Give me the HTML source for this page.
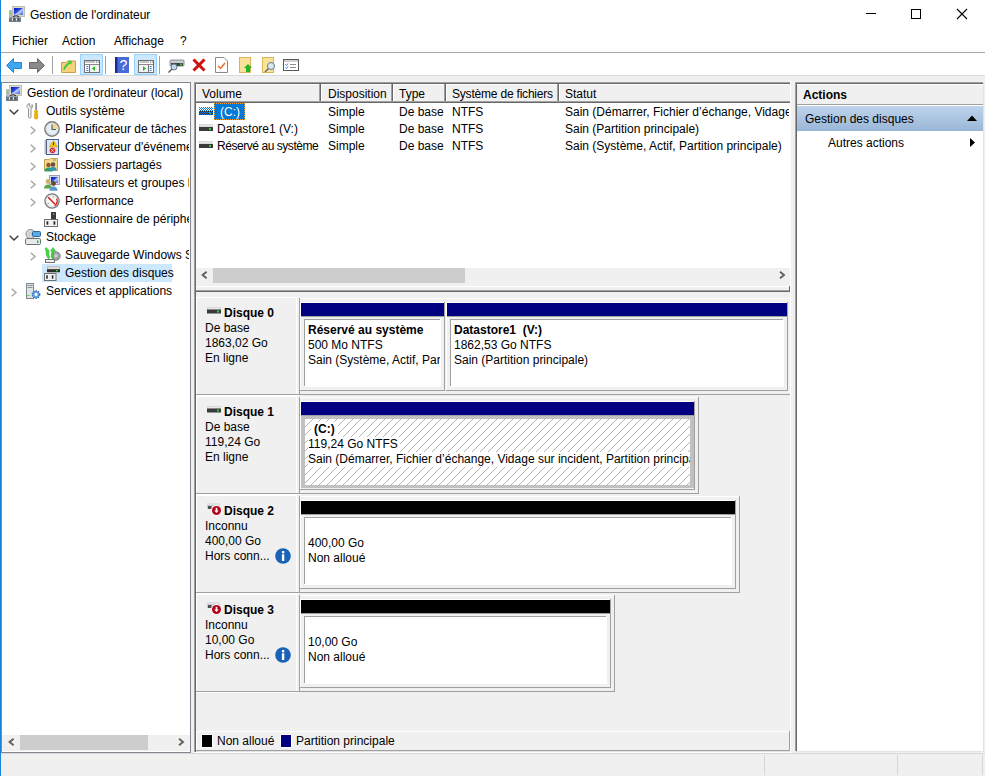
<!DOCTYPE html>
<html><head><meta charset="utf-8">
<style>
*{margin:0;padding:0;box-sizing:border-box}
html,body{width:985px;height:776px;overflow:hidden;background:#f0f0f0;font-family:"Liberation Sans",sans-serif;font-size:12px;color:#000}
.a{position:absolute}
.t{position:absolute;white-space:nowrap;line-height:15px;font-size:12px}
.b{font-weight:bold}
.clip{position:absolute;overflow:hidden}
svg{position:absolute;overflow:visible}
</style></head><body>

<div class="a" style="left:0px;top:0px;width:985px;height:75px;background:#fff;"></div>
<div class="a" style="left:0px;top:52px;width:985px;height:1px;background:#a8a8a8;"></div>
<div class="a" style="left:0px;top:75px;width:985px;height:1px;background:#dadada;"></div>
<svg style="left:9px;top:6px" width="16" height="16" viewBox="0 0 16 16"><rect x="3.5" y="0.5" width="12" height="10" fill="#dcd8c8" stroke="#c4c0b0"/><rect x="5" y="2" width="9" height="7" fill="url(#scr)"/><rect x="0" y="4" width="3" height="7" fill="#b8b8c0"/><rect x="0.5" y="6.5" width="2" height="1.5" fill="#60e040"/><path d="M4 11Q7 8.5 10 11" stroke="#333" stroke-width="1.2" fill="none"/><rect x="0" y="11" width="12" height="5" fill="#6e7c88"/><rect x="0" y="11" width="12" height="1" fill="#9aa6b0"/><rect x="3" y="12.5" width="1.2" height="2" fill="#fff"/><rect x="7" y="12.5" width="1.2" height="2" fill="#fff"/><rect x="4.5" y="12.5" width="1" height="2" fill="#222"/><rect x="8.5" y="12.5" width="1" height="2" fill="#222"/></svg>
<div class="t" style="left:30px;top:8px;">Gestion de l'ordinateur</div>
<div class="a" style="left:866px;top:13px;width:10px;height:1px;background:#000;"></div>
<div class="a" style="left:911px;top:9px;width:10px;height:10px;background:transparent;border:1px solid #000"></div>
<svg style="left:957px;top:9px" width="10" height="10" viewBox="0 0 10 10"><path d="M0 0L10 10M10 0L0 10" stroke="#000" stroke-width="1.1"/></svg>
<div class="t" style="left:12px;top:34px;">Fichier</div>
<div class="t" style="left:62px;top:34px;">Action</div>
<div class="t" style="left:114px;top:34px;">Affichage</div>
<div class="t" style="left:180px;top:34px;">?</div>
<div class="a" style="left:80px;top:54px;width:23px;height:21px;background:#cce8ff;border:1px solid #99d1ff"></div>
<div class="a" style="left:134px;top:54px;width:23px;height:21px;background:#cce8ff;border:1px solid #99d1ff"></div>
<div class="a" style="left:52px;top:56px;width:1px;height:18px;background:#a0a0a0;"></div>
<div class="a" style="left:105px;top:56px;width:1px;height:18px;background:#a0a0a0;"></div>
<div class="a" style="left:159px;top:56px;width:1px;height:18px;background:#a0a0a0;"></div>
<svg style="left:6px;top:58px" width="16" height="15" viewBox="0 0 16 15"><path d="M0.5 7.5L7.5 0.5V4.5H15.5V10.5H7.5V14.5Z" fill="#3fa6ef" stroke="#2a86d0"/></svg>
<svg style="left:29px;top:58px" width="16" height="15" viewBox="0 0 16 15"><path d="M15.5 7.5L8.5 0.5V4.5H0.5V10.5H8.5V14.5Z" fill="#8a8a8a" stroke="#6a6a6a"/></svg>
<svg style="left:61px;top:58px" width="15" height="15" viewBox="0 0 15 15"><path d="M0.5 4.5H5L6.5 3H14.5V14.5H0.5Z" fill="#f5d27a" stroke="#c9a04a"/><path d="M2 11C4 7 6 5 8 4L7 2.5L11 3L10 7L9 5.5C7 7 5 9 3.5 12Z" fill="#3cc83c"/></svg>
<svg style="left:84px;top:60px" width="16" height="13" viewBox="0 0 16 13"><rect x="0.5" y="0.5" width="15" height="12" fill="#fff" stroke="#707070"/><rect x="1" y="1" width="14" height="3" fill="#fff"/><path d="M1.5 2H11M1 4.5H15" stroke="#8a8a8a"/><rect x="12" y="1.5" width="1" height="1.2" fill="#707070"/><rect x="13.8" y="1.5" width="1" height="1.2" fill="#707070"/><path d="M5.5 5V12" stroke="#707070"/><rect x="6" y="5" width="9" height="7" fill="#f2f2f2"/><path d="M2.3 6.5H4.3M2.3 8.5H4.3M2.3 10.5H4.3" stroke="#3a7ad0"/><path d="M11 6.2V11L8 8.6Z" fill="#22b022"/></svg>
<svg style="left:115px;top:57px" width="14" height="16" viewBox="0 0 14 16"><rect x="0" y="0" width="14" height="16" fill="#2a48b8"/><rect x="0" y="0" width="2.5" height="16" fill="#1a2a88"/><rect x="2.5" y="0" width="11.5" height="16" fill="#4a6ad8"/><text x="8.3" y="13.2" font-size="14" font-family="Liberation Sans" fill="#fff" text-anchor="middle">?</text></svg>
<svg style="left:138px;top:60px" width="16" height="13" viewBox="0 0 16 13"><rect x="0.5" y="0.5" width="15" height="12" fill="#fff" stroke="#707070"/><rect x="1" y="1" width="14" height="3" fill="#fff"/><path d="M1.5 2H11M1 4.5H15" stroke="#8a8a8a"/><rect x="12" y="1.5" width="1" height="1.2" fill="#707070"/><rect x="13.8" y="1.5" width="1" height="1.2" fill="#707070"/><path d="M10.5 5V12" stroke="#707070"/><rect x="1" y="5" width="9" height="7" fill="#f2f2f2"/><path d="M11.7 6.5H13.7M11.7 8.5H13.7M11.7 10.5H13.7" stroke="#3a7ad0"/><path d="M5 6.2V11L8 8.6Z" fill="#22b022"/></svg>
<svg style="left:168px;top:59px" width="16" height="14" viewBox="0 0 16 14"><rect x="2" y="1" width="14" height="6" rx="1" fill="#c8ccd0" stroke="#8a9098"/><rect x="3" y="4" width="12" height="3" fill="#404448"/><rect x="12" y="4.5" width="2" height="2" fill="#2ad02a"/><circle cx="6" cy="8" r="3" fill="#c0d8ec" stroke="#6a7a88"/><path d="M4 10L0.5 13.5" stroke="#5a5a5a" stroke-width="1.5"/></svg>
<svg style="left:192px;top:58px" width="14" height="14" viewBox="0 0 14 14"><path d="M1.5 1.5L12.5 12.5M12.5 1.5L1.5 12.5" stroke="#d01010" stroke-width="3"/></svg>
<svg style="left:215px;top:57px" width="13" height="16" viewBox="0 0 13 16"><path d="M0.5 0.5H9L12.5 4V15.5H0.5Z" fill="#fff" stroke="#8a8a8a"/><path d="M3 9L5.5 11.5L10 6" stroke="#f06a2a" stroke-width="1.5" fill="none"/></svg>
<svg style="left:239px;top:57px" width="14" height="16" viewBox="0 0 14 16"><rect x="0.5" y="0.5" width="11" height="15" fill="#fbe29a" stroke="#d9b45a"/><path d="M9 7L13 11H11V15H7V11H5Z" fill="#22b422"/></svg>
<svg style="left:262px;top:57px" width="14" height="16" viewBox="0 0 14 16"><rect x="0.5" y="0.5" width="11" height="15" fill="#fbe29a" stroke="#d9b45a"/><circle cx="9" cy="9" r="3.5" fill="#d8e8f4" stroke="#6a7a88"/><path d="M6.5 11.5L3 15" stroke="#5a6a78" stroke-width="1.5"/></svg>
<svg style="left:283px;top:59px" width="16" height="12" viewBox="0 0 16 12"><rect x="0.5" y="0.5" width="15" height="11" fill="#fff" stroke="#5a5a5a"/><rect x="1" y="1" width="14" height="2" fill="#d0d0d0"/><path d="M2.5 5.5L3.5 6.5L5 4.5M2.5 8.5L3.5 9.5L5 7.5" stroke="#2a7ad8" fill="none"/><path d="M7 5.5H13M7 8.5H13" stroke="#8a8a8a"/></svg>
<div class="a" style="left:0px;top:0px;width:1px;height:776px;background:#1883d7;"></div>
<svg width="0" height="0" style="position:absolute"><defs><linearGradient id="scr" x1="0" y1="0" x2="1" y2="1"><stop offset="0" stop-color="#0010c0"/><stop offset="0.45" stop-color="#3050e0"/><stop offset="0.55" stop-color="#c0d0ff"/><stop offset="1" stop-color="#4060e0"/></linearGradient></defs></svg>
<div class="a" style="left:1px;top:82px;width:190px;height:671px;background:#fff;border:1px solid #828790"></div>
<div class="clip" style="left:2px;top:83px;width:187px;height:652px"><div class="a" style="left:-2px;top:-83px;width:985px;height:776px">
<svg style="left:6px;top:85px" width="16" height="16" viewBox="0 0 16 16"><rect x="3.5" y="0.5" width="12" height="10" fill="#dcd8c8" stroke="#c4c0b0"/><rect x="5" y="2" width="9" height="7" fill="url(#scr)"/><rect x="0" y="4" width="3" height="7" fill="#b8b8c0"/><rect x="0.5" y="6.5" width="2" height="1.5" fill="#60e040"/><path d="M4 11Q7 8.5 10 11" stroke="#333" stroke-width="1.2" fill="none"/><rect x="0" y="11" width="12" height="5" fill="#6e7c88"/><rect x="0" y="11" width="12" height="1" fill="#9aa6b0"/><rect x="3" y="12.5" width="1.2" height="2" fill="#fff"/><rect x="7" y="12.5" width="1.2" height="2" fill="#fff"/><rect x="4.5" y="12.5" width="1" height="2" fill="#222"/><rect x="8.5" y="12.5" width="1" height="2" fill="#222"/></svg>
<div class="t" style="left:27px;top:86px;">Gestion de l'ordinateur (local)</div>
<svg style="left:9px;top:109px" width="10" height="6" viewBox="0 0 10 6"><path d="M0.7 0.7L5 5L9.3 0.7" stroke="#3a3a3a" stroke-width="1.4" fill="none"/></svg>
<svg style="left:25px;top:103px" width="16" height="16" viewBox="0 0 16 16"><path d="M2.5 1.5C1.5 2.5 1.5 4.5 3.5 5.5V14.5Q4.8 16 6 14.5V5.5C8 4.5 8 2.5 7 1.5V4H5.5L4.5 3V0.5Z" fill="#f2f2f2" stroke="#8a8a8a" stroke-width="0.9"/><rect x="10.5" y="0" width="1.2" height="7.5" fill="#5a5a5a"/><rect x="9" y="7.5" width="4.2" height="2" fill="#f0b400"/><rect x="9.5" y="9.5" width="3.2" height="6.5" rx="1" fill="#f0b400" stroke="#d09000" stroke-width="0.5"/></svg>
<div class="t" style="left:46px;top:104px;">Outils système</div>
<svg style="left:30px;top:126px" width="6" height="9" viewBox="0 0 6 9"><path d="M0.7 0.7L5 4.5L0.7 8.3" stroke="#a6a6a6" stroke-width="1.4" fill="none"/></svg>
<svg style="left:44px;top:121px" width="16" height="16" viewBox="0 0 16 16"><circle cx="8" cy="8" r="7.2" fill="#e6eff7" stroke="#7c7c7c" stroke-width="1.4"/><circle cx="8" cy="8" r="5.8" fill="none" stroke="#c8d4de" stroke-width="0.6"/><path d="M8 8V2.2A5.8 5.8 0 0 1 13.8 8Z" fill="#f2d68e"/><path d="M8 3.5V8.5H12" stroke="#4a5e74" stroke-width="1.1" fill="none"/></svg>
<div class="t" style="left:65px;top:122px;">Planificateur de tâches</div>
<svg style="left:30px;top:144px" width="6" height="9" viewBox="0 0 6 9"><path d="M0.7 0.7L5 4.5L0.7 8.3" stroke="#a6a6a6" stroke-width="1.4" fill="none"/></svg>
<svg style="left:44px;top:139px" width="16" height="16" viewBox="0 0 16 16"><rect x="2.5" y="0.5" width="12" height="15" fill="#dfe8f6" stroke="#4a5c94"/><path d="M5 4H13M5 6H13M5 8H13M5 10H13M5 12H13" stroke="#b8c8e4" stroke-width="0.8"/><path d="M0.5 2H3M0.5 4H3M0.5 6H3M0.5 8H3M0.5 10H3M0.5 12H3M0.5 14H3" stroke="#666" stroke-width="0.9"/><path d="M9.5 1.5L13.5 8H5.5Z" fill="#f4c400" stroke="#c89000" stroke-width="0.5"/><rect x="9" y="3.5" width="1" height="2.5" fill="#333"/><circle cx="8.5" cy="11.5" r="2.8" fill="#d42a2a"/><path d="M7.3 10.3L9.7 12.7M9.7 10.3L7.3 12.7" stroke="#fff" stroke-width="0.8"/></svg>
<div class="t" style="left:65px;top:140px;">Observateur d'événements</div>
<svg style="left:30px;top:162px" width="6" height="9" viewBox="0 0 6 9"><path d="M0.7 0.7L5 4.5L0.7 8.3" stroke="#a6a6a6" stroke-width="1.4" fill="none"/></svg>
<svg style="left:44px;top:157px" width="16" height="16" viewBox="0 0 16 16"><path d="M0.5 2.5H5.5L6.5 1.5H13.5V13.5H0.5Z" fill="#f6d88a" stroke="#c8a050"/><rect x="9" y="2.5" width="3" height="1" fill="#5aa0e0"/><circle cx="4.5" cy="8" r="2.2" fill="#8a5a3a"/><path d="M0.5 14.5C0.5 11.5 2.5 10.5 4.5 10.5S8.5 11.5 8.5 14.5Z" fill="#2ea06a"/><circle cx="9" cy="7.5" r="2.2" fill="#6a4a3a"/><path d="M5.5 13.5C5.5 10.5 7 10 9 10S12.5 10.5 12.5 13.5Z" fill="#2a9ac0"/></svg>
<div class="t" style="left:65px;top:158px;">Dossiers partagés</div>
<svg style="left:30px;top:180px" width="6" height="9" viewBox="0 0 6 9"><path d="M0.7 0.7L5 4.5L0.7 8.3" stroke="#a6a6a6" stroke-width="1.4" fill="none"/></svg>
<svg style="left:44px;top:175px" width="16" height="16" viewBox="0 0 16 16"><rect x="5.5" y="0.5" width="10" height="9" fill="#d8dce0" stroke="#a0a4a8"/><rect x="7" y="2" width="7" height="6" fill="url(#scr)"/><circle cx="4" cy="6.5" r="2.4" fill="#d4b070"/><path d="M0 13.5C0 10.5 2 9.5 4 9.5S8 10.5 8 13.5Z" fill="#5aa84a"/><circle cx="9.5" cy="8.5" r="2.4" fill="#6a4a30"/><path d="M5.5 15.8C5.5 12.5 7.5 11.5 9.5 11.5S13.5 12.5 13.5 15.8Z" fill="#5a9ad0"/></svg>
<div class="t" style="left:65px;top:176px;">Utilisateurs et groupes locaux</div>
<svg style="left:30px;top:198px" width="6" height="9" viewBox="0 0 6 9"><path d="M0.7 0.7L5 4.5L0.7 8.3" stroke="#a6a6a6" stroke-width="1.4" fill="none"/></svg>
<svg style="left:44px;top:193px" width="16" height="16" viewBox="0 0 16 16"><circle cx="8" cy="8" r="7.1" fill="#f8f8f8" stroke="#7a7a7a" stroke-width="1.3"/><circle cx="8" cy="8" r="5.6" fill="none" stroke="#d0d0d0" stroke-width="0.6"/><path d="M12.6 5.5A5.2 5.2 0 0 1 10.5 12.6" stroke="#d82020" stroke-width="1.4" fill="none"/><path d="M4.2 4.2L10.8 11" stroke="#d82020" stroke-width="1.6"/><path d="M3.5 11L5 10M9.5 3.5L9 5" stroke="#5aa05a" stroke-width="0.8"/></svg>
<div class="t" style="left:65px;top:194px;">Performance</div>
<svg style="left:44px;top:211px" width="16" height="16" viewBox="0 0 16 16"><rect x="7" y="1" width="5" height="7" fill="#3a3a3a"/><rect x="9" y="2.5" width="1.3" height="1.3" fill="#40e040"/><rect x="0.5" y="8.5" width="13" height="7" fill="#f2f2f2" stroke="#707070"/><rect x="2.5" y="10.3" width="1.8" height="3.4" fill="#2a2a2a"/><rect x="9.5" y="10.3" width="1.8" height="3.4" fill="#2a2a2a"/></svg>
<div class="t" style="left:65px;top:212px;">Gestionnaire de périphériques</div>
<svg style="left:9px;top:235px" width="10" height="6" viewBox="0 0 10 6"><path d="M0.7 0.7L5 5L9.3 0.7" stroke="#3a3a3a" stroke-width="1.4" fill="none"/></svg>
<svg style="left:25px;top:229px" width="16" height="16" viewBox="0 0 16 16"><circle cx="5.5" cy="5" r="4.5" fill="#d8dadc" stroke="#8a8c90"/><circle cx="5.5" cy="5" r="1.2" fill="#fff" stroke="#888" stroke-width="0.5"/><rect x="7.5" y="2.5" width="8" height="5" rx="1" fill="#5aace0" stroke="#2a6aa0"/><rect x="0.5" y="9.5" width="15" height="6" rx="1.2" fill="#e6e8ea" stroke="#6a7078"/><rect x="12" y="11.5" width="1.5" height="2.5" fill="#30c030"/></svg>
<div class="t" style="left:46px;top:230px;">Stockage</div>
<svg style="left:30px;top:252px" width="6" height="9" viewBox="0 0 6 9"><path d="M0.7 0.7L5 4.5L0.7 8.3" stroke="#a6a6a6" stroke-width="1.4" fill="none"/></svg>
<svg style="left:44px;top:247px" width="16" height="16" viewBox="0 0 16 16"><rect x="1.5" y="12.5" width="9" height="3" fill="#f0f0f0" stroke="#707070"/><circle cx="12" cy="9" r="4.2" fill="#a8acb0" stroke="#606468" stroke-width="0.8"/><circle cx="12" cy="9" r="1.2" fill="#e0e0e0"/><path d="M12.5 10L14.5 12" stroke="#e07050" stroke-width="1"/><path d="M1 2C3 4 1.5 6 2.5 8.5C3 10 4 11 4.5 12L6 10C5 9 4.5 7.5 5 5.5C5.5 4 4 2 2 0.5Z" fill="#40d840" stroke="#28a828" stroke-width="0.5"/><path d="M9 0.5L6.5 4H8C7.5 6 7 8 8 11L9.5 12.5C9 10 9 7 10 4H11.5Z" fill="#40d840" stroke="#28a828" stroke-width="0.5"/></svg>
<div class="t" style="left:65px;top:248px;">Sauvegarde Windows Server</div>
<div class="a" style="left:42px;top:264px;width:130px;height:18px;background:#cce8ff;"></div>
<svg style="left:44px;top:265px" width="16" height="16" viewBox="0 0 16 16"><rect x="3.5" y="1.5" width="12" height="5.5" fill="#dcdcdc" stroke="#b8b8b8" stroke-width="0.8"/><rect x="3" y="4.2" width="13" height="3" fill="#2e2e2e"/><rect x="12" y="5" width="1.6" height="1.4" fill="#30e030"/><rect x="0.5" y="8.5" width="11.5" height="7" fill="#f2f2f2" stroke="#707070"/><rect x="2.2" y="10.3" width="1.6" height="3.4" fill="#2a2a2a"/><rect x="7.8" y="10.3" width="1.6" height="3.4" fill="#2a2a2a"/></svg>
<div class="t" style="left:65px;top:266px;">Gestion des disques</div>
<svg style="left:11px;top:288px" width="6" height="9" viewBox="0 0 6 9"><path d="M0.7 0.7L5 4.5L0.7 8.3" stroke="#a6a6a6" stroke-width="1.4" fill="none"/></svg>
<svg style="left:25px;top:283px" width="16" height="16" viewBox="0 0 16 16"><rect x="1.5" y="0.5" width="7" height="15" fill="#dfe3e6" stroke="#808890"/><path d="M2.5 2.5H7.5M2.5 4.5H7.5" stroke="#808890" stroke-width="0.9"/><rect x="2.5" y="12" width="2" height="1" fill="#3c3"/><circle cx="11" cy="11.5" r="3.6" fill="#6aa8e6" stroke="#3a78c0" stroke-width="1.6" stroke-dasharray="1.4 0.9"/><circle cx="11" cy="11.5" r="1.4" fill="#fff"/></svg>
<div class="t" style="left:46px;top:284px;">Services et applications</div>
</div></div>
<div class="a" style="left:2px;top:735px;width:188px;height:16px;background:#f0f0f0;"></div>
<div class="a" style="left:20px;top:735px;width:128px;height:15px;background:#cdcdcd;"></div>
<svg style="left:8px;top:738px" width="7" height="8" viewBox="0 0 7 8"><path d="M5.6 0.8L1.6 4L5.6 7.2" stroke="#606060" stroke-width="1.9" fill="none"/></svg>
<svg style="left:178px;top:738px" width="7" height="8" viewBox="0 0 7 8"><path d="M1 0.8L5 4L1 7.2" stroke="#606060" stroke-width="1.9" fill="none"/></svg>
<div class="a" style="left:2px;top:751px;width:188px;height:1px;background:#fff;"></div>
<div class="a" style="left:194px;top:82px;width:597px;height:206px;background:#fff;"></div>
<div class="a" style="left:194px;top:82px;width:596px;height:1px;background:#a0a0a0;"></div>
<div class="a" style="left:195px;top:83px;width:595px;height:1px;background:#696969;"></div>
<div class="a" style="left:194px;top:82px;width:1px;height:671px;background:#a0a0a0;"></div>
<div class="a" style="left:195px;top:83px;width:1px;height:669px;background:#696969;"></div>
<div class="a" style="left:790px;top:82px;width:1px;height:671px;background:#ffffff;"></div>
<div class="a" style="left:196px;top:84px;width:594px;height:19px;background:#f0f0f0;"></div>
<div class="a" style="left:196px;top:84px;width:125px;height:1px;background:#fff;"></div>
<div class="a" style="left:196px;top:84px;width:1px;height:18px;background:#fff;"></div>
<div class="a" style="left:319px;top:84px;width:1px;height:18px;background:#a0a0a0;"></div>
<div class="a" style="left:320px;top:84px;width:1px;height:19px;background:#696969;"></div>
<div class="t" style="left:202px;top:87px;">Volume</div>
<div class="a" style="left:321px;top:84px;width:72px;height:1px;background:#fff;"></div>
<div class="a" style="left:321px;top:84px;width:1px;height:18px;background:#fff;"></div>
<div class="a" style="left:391px;top:84px;width:1px;height:18px;background:#a0a0a0;"></div>
<div class="a" style="left:392px;top:84px;width:1px;height:19px;background:#696969;"></div>
<div class="t" style="left:328px;top:87px;">Disposition</div>
<div class="a" style="left:393px;top:84px;width:53px;height:1px;background:#fff;"></div>
<div class="a" style="left:393px;top:84px;width:1px;height:18px;background:#fff;"></div>
<div class="a" style="left:444px;top:84px;width:1px;height:18px;background:#a0a0a0;"></div>
<div class="a" style="left:445px;top:84px;width:1px;height:19px;background:#696969;"></div>
<div class="t" style="left:399px;top:87px;">Type</div>
<div class="a" style="left:446px;top:84px;width:113px;height:1px;background:#fff;"></div>
<div class="a" style="left:446px;top:84px;width:1px;height:18px;background:#fff;"></div>
<div class="a" style="left:557px;top:84px;width:1px;height:18px;background:#a0a0a0;"></div>
<div class="a" style="left:558px;top:84px;width:1px;height:19px;background:#696969;"></div>
<div class="t" style="left:452px;top:87px;letter-spacing:-0.2px">Système de fichiers</div>
<div class="a" style="left:559px;top:84px;width:230px;height:1px;background:#fff;"></div>
<div class="a" style="left:559px;top:84px;width:1px;height:18px;background:#fff;"></div>
<div class="t" style="left:565px;top:87px;">Statut</div>
<div class="a" style="left:196px;top:101px;width:594px;height:1px;background:#a0a0a0;"></div>
<div class="a" style="left:196px;top:102px;width:594px;height:1px;background:#696969;"></div>
<div class="a" style="left:214px;top:103px;width:31px;height:17px;background:#0078d7;outline:1px dotted #f0a030;outline-offset:-1px"></div>
<div class="t" style="left:220px;top:105px;color:#fff">(C:)</div>
<svg style="left:199px;top:107px" width="14" height="9" viewBox="0 0 14 9"><g shape-rendering="crispEdges"><rect x="1" y="0" width="12" height="4" fill="#fff"/><rect x="0" y="4" width="14" height="4" fill="#303030"/><rect x="10" y="5" width="2" height="2" fill="#20d020"/><rect x="0" y="0" width="14" height="8" fill="url(#chk)"/></g></svg>
<div class="t" style="left:328px;top:105px;">Simple</div>
<div class="t" style="left:399px;top:105px;">De base</div>
<div class="t" style="left:452px;top:105px;">NTFS</div>
<svg style="left:199px;top:124px" width="14" height="8" viewBox="0 0 14 8"><rect x="0.5" y="0.5" width="13" height="2" fill="#e8e8e8" stroke="#c0c0c0" stroke-width="0.5"/><rect x="0" y="3" width="14" height="4" fill="#3a3a3a"/><rect x="10" y="4" width="2" height="2" fill="#2ad02a"/></svg>
<div class="t" style="left:217px;top:122px;">Datastore1 (V:)</div>
<div class="t" style="left:328px;top:122px;">Simple</div>
<div class="t" style="left:399px;top:122px;">De base</div>
<div class="t" style="left:452px;top:122px;">NTFS</div>
<svg style="left:199px;top:141px" width="14" height="8" viewBox="0 0 14 8"><rect x="0.5" y="0.5" width="13" height="2" fill="#e8e8e8" stroke="#c0c0c0" stroke-width="0.5"/><rect x="0" y="3" width="14" height="4" fill="#3a3a3a"/><rect x="10" y="4" width="2" height="2" fill="#2ad02a"/></svg>
<div class="t" style="left:217px;top:139px;letter-spacing:-0.45px">Réservé au système</div>
<div class="t" style="left:328px;top:139px;">Simple</div>
<div class="t" style="left:399px;top:139px;">De base</div>
<div class="t" style="left:452px;top:139px;">NTFS</div>
<div class="clip" style="left:559px;top:103px;width:230px;height:60px">
<div class="t" style="left:6px;top:2px">Sain (Démarrer, Fichier d’échange, Vidage sur incident, Partition principale)</div>
<div class="t" style="left:6px;top:19px">Sain (Partition principale)</div>
<div class="t" style="left:6px;top:36px">Sain (Système, Actif, Partition principale)</div>
</div>
<div class="a" style="left:196px;top:268px;width:594px;height:18px;background:#f0f0f0;"></div>
<div class="a" style="left:213px;top:268px;width:252px;height:15px;background:#cdcdcd;"></div>
<svg style="left:201px;top:271px" width="7" height="8" viewBox="0 0 7 8"><path d="M5.6 0.8L1.6 4L5.6 7.2" stroke="#606060" stroke-width="1.9" fill="none"/></svg>
<svg style="left:779px;top:271px" width="7" height="8" viewBox="0 0 7 8"><path d="M1 0.8L5 4L1 7.2" stroke="#606060" stroke-width="1.9" fill="none"/></svg>
<div class="a" style="left:196px;top:286px;width:594px;height:1px;background:#fff;"></div>
<div class="a" style="left:196px;top:287px;width:594px;height:3px;background:#f0f0f0;"></div>
<div class="a" style="left:196px;top:287px;width:1px;height:3px;background:#fff;"></div>
<div class="a" style="left:196px;top:292px;width:594px;height:459px;background:#f0f0f0;"></div>
<div class="a" style="left:196px;top:290px;width:594px;height:1px;background:#a0a0a0;"></div>
<div class="a" style="left:196px;top:291px;width:594px;height:1px;background:#696969;"></div>
<div class="a" style="left:789px;top:286px;width:1px;height:6px;background:#696969;"></div>
<div class="a" style="left:194px;top:752px;width:597px;height:1px;background:#fff;"></div>
<div class="a" style="left:196px;top:751px;width:594px;height:1px;background:#e3e3e3;"></div>
<svg width="0" height="0" style="position:absolute"><defs><pattern id="hatch" width="8" height="8" patternUnits="userSpaceOnUse"><path d="M-1 1L1 -1M0 8L8 0M7 9L9 7" stroke="#a0a0a0" stroke-width="0.8"/></pattern><pattern id="chk" width="2" height="2" patternUnits="userSpaceOnUse"><rect x="0" y="0" width="1" height="1" fill="#0a78d8"/><rect x="1" y="1" width="1" height="1" fill="#0a78d8"/></pattern></defs></svg>
<div class="a" style="left:196px;top:297px;width:101px;height:1px;background:#fff;"></div>
<div class="a" style="left:196px;top:297px;width:1px;height:98px;background:#fff;"></div>
<div class="a" style="left:296px;top:297px;width:1px;height:98px;background:#fff;"></div>
<div class="a" style="left:196px;top:394px;width:103px;height:1px;background:#a0a0a0;"></div>
<div class="a" style="left:196px;top:395px;width:103px;height:1px;background:#fff;"></div>
<svg style="left:207px;top:307px" width="14" height="7" viewBox="0 0 14 7"><rect x="0.5" y="0.5" width="13" height="2" fill="#e8e8e8" stroke="#c8c8c8" stroke-width="0.5"/><rect x="0" y="2.5" width="14" height="4" fill="#3a3a3a"/><rect x="10" y="3.5" width="2" height="2" fill="#2ad02a"/></svg>
<div class="t b" style="left:224px;top:306px;">Disque 0</div>
<div class="t" style="left:205px;top:321px;">De base</div>
<div class="t" style="left:205px;top:336px;">1863,02 Go</div>
<div class="t" style="left:205px;top:351px;">En ligne</div>
<div class="a" style="left:299px;top:298px;width:1px;height:97px;background:#a0a0a0;"></div>
<div class="a" style="left:300px;top:298px;width:490px;height:1px;background:#fff;"></div>
<div class="a" style="left:299px;top:394px;width:491px;height:1px;background:#a0a0a0;"></div>
<div class="a" style="left:300px;top:302px;width:144px;height:1px;background:#fff;"></div>
<div class="a" style="left:300px;top:302px;width:1px;height:88px;background:#fff;"></div>
<div class="a" style="left:444px;top:302px;width:1px;height:89px;background:#a0a0a0;"></div>
<div class="a" style="left:300px;top:390px;width:145px;height:1px;background:#a0a0a0;"></div>
<div class="a" style="left:301px;top:303px;width:143px;height:13px;background:#000080;"></div>
<div class="a" style="left:301px;top:316px;width:143px;height:1px;background:#a0a0a0;"></div>
<div class="a" style="left:304px;top:319px;width:137px;height:68px;background:#fff;"></div>
<div class="a" style="left:304px;top:319px;width:136px;height:1px;background:#a0a0a0;"></div>
<div class="a" style="left:304px;top:319px;width:1px;height:67px;background:#a0a0a0;"></div>
<div class="clip" style="left:305px;top:320px;width:135px;height:66px"><div class="a" style="left:-305px;top:-320px;width:985px;height:776px">
<div class="t b" style="left:308px;top:323px;">Réservé au système</div>
<div class="t" style="left:308px;top:338px;">500 Mo NTFS</div>
<div class="t" style="left:308px;top:353px;">Sain (Système, Actif, Partition principale)</div>
</div></div>
<div class="a" style="left:446px;top:302px;width:341px;height:1px;background:#fff;"></div>
<div class="a" style="left:446px;top:302px;width:1px;height:88px;background:#fff;"></div>
<div class="a" style="left:787px;top:302px;width:1px;height:89px;background:#a0a0a0;"></div>
<div class="a" style="left:446px;top:390px;width:342px;height:1px;background:#a0a0a0;"></div>
<div class="a" style="left:447px;top:303px;width:340px;height:13px;background:#000080;"></div>
<div class="a" style="left:447px;top:316px;width:340px;height:1px;background:#a0a0a0;"></div>
<div class="a" style="left:450px;top:319px;width:334px;height:68px;background:#fff;"></div>
<div class="a" style="left:450px;top:319px;width:333px;height:1px;background:#a0a0a0;"></div>
<div class="a" style="left:450px;top:319px;width:1px;height:67px;background:#a0a0a0;"></div>
<div class="clip" style="left:451px;top:320px;width:332px;height:66px"><div class="a" style="left:-451px;top:-320px;width:985px;height:776px">
<div class="t b" style="left:454px;top:323px;">Datastore1&nbsp; (V:)</div>
<div class="t" style="left:454px;top:338px;">1862,53 Go NTFS</div>
<div class="t" style="left:454px;top:353px;">Sain (Partition principale)</div>
</div></div>
<div class="a" style="left:196px;top:396px;width:101px;height:1px;background:#fff;"></div>
<div class="a" style="left:196px;top:396px;width:1px;height:98px;background:#fff;"></div>
<div class="a" style="left:296px;top:396px;width:1px;height:98px;background:#fff;"></div>
<div class="a" style="left:196px;top:493px;width:103px;height:1px;background:#a0a0a0;"></div>
<div class="a" style="left:196px;top:494px;width:103px;height:1px;background:#fff;"></div>
<svg style="left:207px;top:406px" width="14" height="7" viewBox="0 0 14 7"><rect x="0.5" y="0.5" width="13" height="2" fill="#e8e8e8" stroke="#c8c8c8" stroke-width="0.5"/><rect x="0" y="2.5" width="14" height="4" fill="#3a3a3a"/><rect x="10" y="3.5" width="2" height="2" fill="#2ad02a"/></svg>
<div class="t b" style="left:224px;top:405px;">Disque 1</div>
<div class="t" style="left:205px;top:420px;">De base</div>
<div class="t" style="left:205px;top:435px;">119,24 Go</div>
<div class="t" style="left:205px;top:450px;">En ligne</div>
<div class="a" style="left:299px;top:397px;width:1px;height:97px;background:#a0a0a0;"></div>
<div class="a" style="left:300px;top:397px;width:399px;height:1px;background:#fff;"></div>
<div class="a" style="left:698px;top:397px;width:1px;height:97px;background:#a0a0a0;"></div>
<div class="a" style="left:299px;top:493px;width:400px;height:1px;background:#a0a0a0;"></div>
<div class="a" style="left:300px;top:401px;width:394px;height:1px;background:#fff;"></div>
<div class="a" style="left:300px;top:401px;width:1px;height:88px;background:#fff;"></div>
<div class="a" style="left:694px;top:401px;width:1px;height:89px;background:#a0a0a0;"></div>
<div class="a" style="left:300px;top:489px;width:395px;height:1px;background:#a0a0a0;"></div>
<div class="a" style="left:301px;top:402px;width:393px;height:13px;background:#000080;"></div>
<div class="a" style="left:301px;top:415px;width:393px;height:1px;background:#a0a0a0;"></div>
<div class="a" style="left:301px;top:415px;width:393px;height:73px;background:#c0c0c0;"></div>
<div class="a" style="left:301px;top:415px;width:393px;height:1px;background:#a0a0a0;"></div>
<svg style="left:305px;top:419px" width="385" height="66"><rect width="100%" height="100%" fill="#fff"/><rect width="100%" height="100%" fill="url(#hatch)"/></svg>
<div class="clip" style="left:305px;top:419px;width:385px;height:66px"><div class="a" style="left:-305px;top:-419px;width:985px;height:776px">
<div class="t b" style="left:312px;top:422px;background:#fff;padding:0 3px 0 3px;margin-left:-1px">(C:)</div>
<div class="t" style="left:308px;top:437px;background:#fff;padding-right:2px">119,24 Go NTFS</div>
<div class="t" style="left:308px;top:452px;background:#fff">Sain (Démarrer, Fichier d’échange, Vidage sur incident, Partition principale)</div>
</div></div>
<div class="a" style="left:196px;top:495px;width:101px;height:1px;background:#fff;"></div>
<div class="a" style="left:196px;top:495px;width:1px;height:98px;background:#fff;"></div>
<div class="a" style="left:296px;top:495px;width:1px;height:98px;background:#fff;"></div>
<div class="a" style="left:196px;top:592px;width:103px;height:1px;background:#a0a0a0;"></div>
<div class="a" style="left:196px;top:593px;width:103px;height:1px;background:#fff;"></div>
<svg style="left:207px;top:503px" width="16" height="12" viewBox="0 0 16 12"><rect x="0" y="0" width="13" height="6" fill="#c8ccd0"/><rect x="0" y="0" width="13" height="2" fill="#dde0e3"/><rect x="1" y="3" width="3.5" height="3" fill="#505050"/><circle cx="9.5" cy="7.5" r="5.4" fill="#fff"/><circle cx="9.5" cy="7.5" r="4.5" fill="#b80018"/><path d="M9.5 4.8V8.6" stroke="#fff" stroke-width="1.6"/><path d="M7.2 7.4L9.5 10L11.8 7.4Z" fill="#fff"/></svg>
<div class="t b" style="left:224px;top:504px;">Disque 2</div>
<svg style="left:275px;top:548px" width="16" height="16" viewBox="0 0 16 16"><circle cx="8" cy="8" r="7.8" fill="#1862b8"/><rect x="6.9" y="6.3" width="2.4" height="6.7" fill="#fff"/><rect x="6.9" y="3" width="2.4" height="2.3" fill="#fff"/></svg>
<div class="t" style="left:205px;top:519px;">Inconnu</div>
<div class="t" style="left:205px;top:534px;">400,00 Go</div>
<div class="t" style="left:205px;top:549px;">Hors conn...</div>
<div class="a" style="left:299px;top:496px;width:1px;height:97px;background:#a0a0a0;"></div>
<div class="a" style="left:300px;top:496px;width:440px;height:1px;background:#fff;"></div>
<div class="a" style="left:739px;top:496px;width:1px;height:97px;background:#a0a0a0;"></div>
<div class="a" style="left:299px;top:592px;width:441px;height:1px;background:#a0a0a0;"></div>
<div class="a" style="left:300px;top:500px;width:435px;height:1px;background:#fff;"></div>
<div class="a" style="left:300px;top:500px;width:1px;height:88px;background:#fff;"></div>
<div class="a" style="left:735px;top:500px;width:1px;height:89px;background:#a0a0a0;"></div>
<div class="a" style="left:300px;top:588px;width:436px;height:1px;background:#a0a0a0;"></div>
<div class="a" style="left:301px;top:501px;width:434px;height:13px;background:#000;"></div>
<div class="a" style="left:301px;top:514px;width:434px;height:1px;background:#a0a0a0;"></div>
<div class="a" style="left:304px;top:517px;width:428px;height:68px;background:#fff;"></div>
<div class="a" style="left:304px;top:517px;width:427px;height:1px;background:#a0a0a0;"></div>
<div class="a" style="left:304px;top:517px;width:1px;height:67px;background:#a0a0a0;"></div>
<div class="clip" style="left:305px;top:518px;width:426px;height:66px"><div class="a" style="left:-305px;top:-518px;width:985px;height:776px">
<div class="t" style="left:308px;top:536px;">400,00 Go</div>
<div class="t" style="left:308px;top:551px;">Non alloué</div>
</div></div>
<div class="a" style="left:196px;top:594px;width:101px;height:1px;background:#fff;"></div>
<div class="a" style="left:196px;top:594px;width:1px;height:98px;background:#fff;"></div>
<div class="a" style="left:296px;top:594px;width:1px;height:98px;background:#fff;"></div>
<div class="a" style="left:196px;top:691px;width:103px;height:1px;background:#a0a0a0;"></div>
<div class="a" style="left:196px;top:692px;width:103px;height:1px;background:#fff;"></div>
<svg style="left:207px;top:602px" width="16" height="12" viewBox="0 0 16 12"><rect x="0" y="0" width="13" height="6" fill="#c8ccd0"/><rect x="0" y="0" width="13" height="2" fill="#dde0e3"/><rect x="1" y="3" width="3.5" height="3" fill="#505050"/><circle cx="9.5" cy="7.5" r="5.4" fill="#fff"/><circle cx="9.5" cy="7.5" r="4.5" fill="#b80018"/><path d="M9.5 4.8V8.6" stroke="#fff" stroke-width="1.6"/><path d="M7.2 7.4L9.5 10L11.8 7.4Z" fill="#fff"/></svg>
<div class="t b" style="left:224px;top:603px;">Disque 3</div>
<svg style="left:275px;top:647px" width="16" height="16" viewBox="0 0 16 16"><circle cx="8" cy="8" r="7.8" fill="#1862b8"/><rect x="6.9" y="6.3" width="2.4" height="6.7" fill="#fff"/><rect x="6.9" y="3" width="2.4" height="2.3" fill="#fff"/></svg>
<div class="t" style="left:205px;top:618px;">Inconnu</div>
<div class="t" style="left:205px;top:633px;">10,00 Go</div>
<div class="t" style="left:205px;top:648px;">Hors conn...</div>
<div class="a" style="left:299px;top:595px;width:1px;height:97px;background:#a0a0a0;"></div>
<div class="a" style="left:300px;top:595px;width:315px;height:1px;background:#fff;"></div>
<div class="a" style="left:614px;top:595px;width:1px;height:97px;background:#a0a0a0;"></div>
<div class="a" style="left:299px;top:691px;width:316px;height:1px;background:#a0a0a0;"></div>
<div class="a" style="left:300px;top:599px;width:310px;height:1px;background:#fff;"></div>
<div class="a" style="left:300px;top:599px;width:1px;height:88px;background:#fff;"></div>
<div class="a" style="left:610px;top:599px;width:1px;height:89px;background:#a0a0a0;"></div>
<div class="a" style="left:300px;top:687px;width:311px;height:1px;background:#a0a0a0;"></div>
<div class="a" style="left:301px;top:600px;width:309px;height:13px;background:#000;"></div>
<div class="a" style="left:301px;top:613px;width:309px;height:1px;background:#a0a0a0;"></div>
<div class="a" style="left:304px;top:616px;width:303px;height:68px;background:#fff;"></div>
<div class="a" style="left:304px;top:616px;width:302px;height:1px;background:#a0a0a0;"></div>
<div class="a" style="left:304px;top:616px;width:1px;height:67px;background:#a0a0a0;"></div>
<div class="clip" style="left:305px;top:617px;width:301px;height:66px"><div class="a" style="left:-305px;top:-617px;width:985px;height:776px">
<div class="t" style="left:308px;top:635px;">10,00 Go</div>
<div class="t" style="left:308px;top:650px;">Non alloué</div>
</div></div>
<div class="a" style="left:196px;top:731px;width:594px;height:1px;background:#fff;"></div>
<div class="a" style="left:196px;top:731px;width:1px;height:19px;background:#fff;"></div>
<div class="a" style="left:196px;top:750px;width:594px;height:1px;background:#a0a0a0;"></div>
<div class="a" style="left:789px;top:731px;width:1px;height:20px;background:#a0a0a0;"></div>
<div class="a" style="left:201px;top:734px;width:12px;height:14px;background:#000;border:1px solid #fff"></div>
<div class="t" style="left:217px;top:734px;">Non alloué</div>
<div class="a" style="left:280px;top:734px;width:12px;height:14px;background:#000080;border:1px solid #fff"></div>
<div class="t" style="left:296px;top:734px;">Partition principale</div>
<div class="a" style="left:795px;top:82px;width:189px;height:670px;background:#fff;"></div>
<div class="a" style="left:795px;top:82px;width:189px;height:1px;background:#a0a0a0;"></div>
<div class="a" style="left:796px;top:83px;width:188px;height:1px;background:#696969;"></div>
<div class="a" style="left:795px;top:82px;width:1px;height:670px;background:#a0a0a0;"></div>
<div class="a" style="left:796px;top:83px;width:1px;height:669px;background:#696969;"></div>
<div class="a" style="left:983px;top:82px;width:1px;height:670px;background:#e3e3e3;"></div>
<div class="a" style="left:795px;top:751px;width:189px;height:1px;background:#e3e3e3;"></div>
<div class="a" style="left:797px;top:84px;width:186px;height:20px;background:#f0f0f0;"></div>
<div class="a" style="left:797px;top:84px;width:186px;height:1px;background:#fff;"></div>
<div class="a" style="left:797px;top:104px;width:186px;height:1px;background:#a0a0a0;"></div>
<div class="t b" style="left:803px;top:88px;">Actions</div>
<div class="a" style="left:797px;top:105px;width:186px;height:1px;background:#fff;"></div>
<div class="a" style="left:797px;top:106px;width:186px;height:25px;background:#b0c8e4;background:linear-gradient(#bed4eb,#9ab6d7)"></div>
<div class="t" style="left:805px;top:112px;">Gestion des disques</div>
<svg style="left:967px;top:115px" width="10" height="6" viewBox="0 0 10 6"><path d="M0 6L5 0.5L10 6Z" fill="#000"/></svg>
<div class="t" style="left:828px;top:136px;">Autres actions</div>
<svg style="left:970px;top:138px" width="5" height="9" viewBox="0 0 5 9"><path d="M0 0L5 4.5L0 9Z" fill="#000"/></svg>
<div class="a" style="left:1px;top:753px;width:984px;height:1px;background:#d7d7d7;"></div>
<div class="a" style="left:764px;top:755px;width:1px;height:20px;background:#d7d7d7;"></div>
<div class="a" style="left:897px;top:755px;width:1px;height:20px;background:#d7d7d7;"></div>
<div class="a" style="left:982px;top:755px;width:1px;height:20px;background:#d7d7d7;"></div>
</body></html>
